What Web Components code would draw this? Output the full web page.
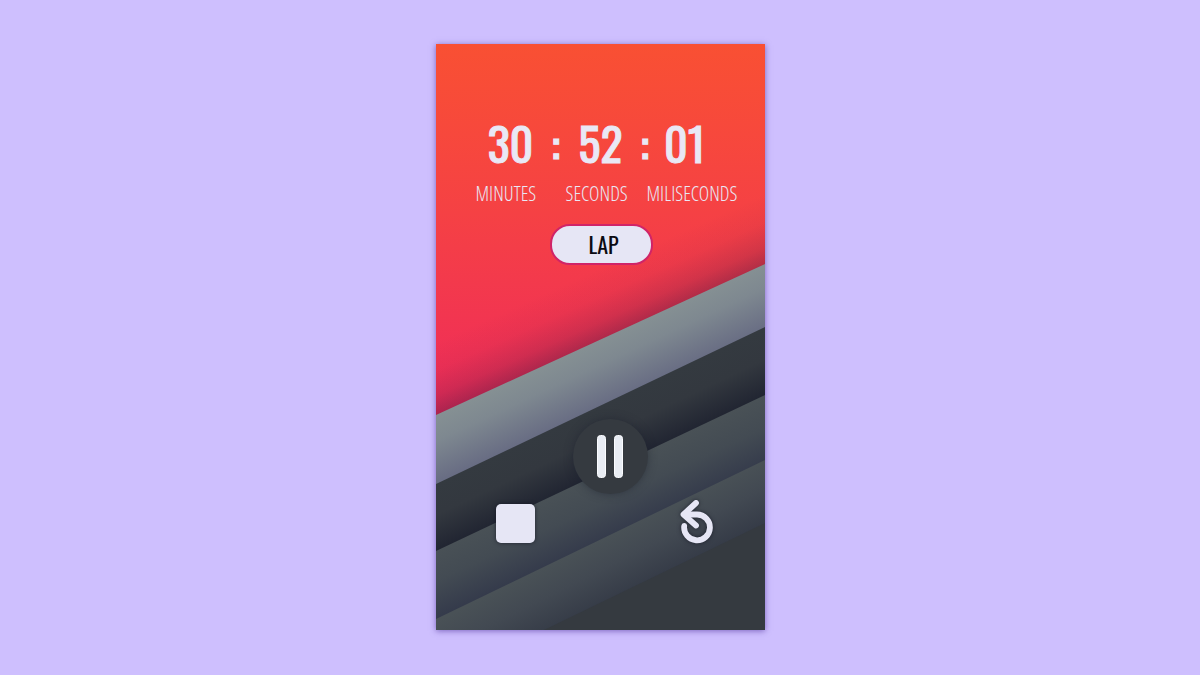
<!DOCTYPE html>
<html lang="en">
<head>
<meta charset="utf-8">
<meta name="viewport" content="width=device-width, initial-scale=1">
<title>Stopwatch</title>
<style>
  html, body { height: 100%; margin: 0; }
  body {
    display: grid;
    place-items: center;
    box-sizing: border-box;
    padding-bottom: 1px;
    background: #cebffe;
    font-family: "Oswald", "Liberation Sans Narrow", "Roboto Condensed", "Open Sans", sans-serif;
  }
</style>
</head>
<body>
<stopwatch-card>
  <time-readout slot="readout" minutes="30" seconds="52" miliseconds="01"></time-readout>
  <lap-button slot="readout">LAP</lap-button>
  <stopwatch-controls slot="controls"></stopwatch-controls>
</stopwatch-card>

<script>
class StopwatchCard extends HTMLElement {
  constructor() {
    super();
    this.attachShadow({ mode: "open" }).innerHTML = `
      <style>
        :host {
          display: block;
          position: relative;
          width: 100%;
          max-width: 329px;
          min-height: 586px;
          overflow: hidden;
          box-shadow: 0 1px 6px rgba(70, 40, 150, .6);
        }
        stripe-backdrop { position: absolute; inset: 0; }
        main {
          position: relative;
          display: flex;
          flex-direction: column;
          min-height: 586px;
        }
        header {
          display: flex;
          flex-direction: column;
          align-items: center;
          padding-top: 70px;
        }
        footer { margin-top: 154px; }
      </style>
      <stripe-backdrop></stripe-backdrop>
      <main>
        <header><slot name="readout"></slot></header>
        <footer><slot name="controls"></slot></footer>
      </main>`;
  }
}

class StripeBackdrop extends HTMLElement {
  constructor() {
    super();
    this.attachShadow({ mode: "open" }).innerHTML = `
      <style>
        :host { display: block; }
        svg { display: block; width: 100%; height: 100%; }
      </style>
      <svg viewBox="0 0 329 586" preserveAspectRatio="none" aria-hidden="true">
        <defs>
          <linearGradient id="sky" gradientUnits="userSpaceOnUse" x1="0" y1="0" x2="0" y2="375">
            <stop offset="0" stop-color="#f95033"/>
            <stop offset=".45" stop-color="#f54144"/>
            <stop offset="1" stop-color="#ef2a5c"/>
          </linearGradient>
          <linearGradient id="skyShade" gradientUnits="userSpaceOnUse" x1="137" y1="236" x2="164" y2="296">
            <stop offset="0" stop-color="#5a1440" stop-opacity="0"/>
            <stop offset=".4" stop-color="#5a1c40" stop-opacity=".06"/>
            <stop offset=".75" stop-color="#5a1c40" stop-opacity=".22"/>
            <stop offset="1" stop-color="#5a1c40" stop-opacity=".44"/>
          </linearGradient>
          <linearGradient id="steel" gradientUnits="userSpaceOnUse" x1="164" y1="296" x2="191" y2="354">
            <stop offset="0" stop-color="#859093"/>
            <stop offset=".35" stop-color="#7e8890"/>
            <stop offset="1" stop-color="#666a82"/>
          </linearGradient>
          <linearGradient id="coal" gradientUnits="userSpaceOnUse" x1="164" y1="362" x2="191" y2="419">
            <stop offset="0" stop-color="#343a40"/>
            <stop offset=".45" stop-color="#33383f"/>
            <stop offset="1" stop-color="#202431"/>
          </linearGradient>
          <linearGradient id="slate" gradientUnits="userSpaceOnUse" x1="164" y1="429" x2="191" y2="487">
            <stop offset="0" stop-color="#495156"/>
            <stop offset=".45" stop-color="#434b53"/>
            <stop offset="1" stop-color="#343a4b"/>
          </linearGradient>
          <linearGradient id="slateLow" gradientUnits="userSpaceOnUse" x1="164" y1="496" x2="191" y2="550">
            <stop offset="0" stop-color="#495156"/>
            <stop offset=".45" stop-color="#424952"/>
            <stop offset="1" stop-color="#353b47"/>
          </linearGradient>
        </defs>
        <path fill="url(#sky)" d="M0 0H329V222L0 373Z"/>
        <path fill="url(#skyShade)" d="M0 0H329V222L0 373Z"/>
        <path fill="url(#steel)" d="M0 371L329 220V285L0 442Z"/>
        <path fill="url(#coal)" d="M0 440L329 283V353L0 509Z"/>
        <path fill="url(#slate)" d="M0 507L329 351V418L0 577Z"/>
        <path fill="url(#slateLow)" d="M0 575L329 416V586H0Z"/>
        <path fill="#353a40" d="M108 586L329 479V586Z"/>
      </svg>`;
  }
}

class TimeReadout extends HTMLElement {
  connectedCallback() {
    const value = name => this.getAttribute(name);
    this.attachShadow({ mode: "open" }).innerHTML = `
      <style>
        :host { display: block; width: 100%; color: #e9e8f5; }
        .digits {
          display: grid;
          grid-template-columns: 44px 46px 44px 44px 36px;
          padding-left: 53px;
          font-size: 46px;
          -webkit-text-stroke: 1px currentColor;
          line-height: 56px;
        }
        .digits span { display: flex; justify-content: center; white-space: nowrap; }
        .labels {
          display: grid;
          grid-template-columns: 90px 81px auto;
          padding: 12px 0 0 40px;
          font-family: "Open Sans Condensed Light", "Open Sans Condensed", "Roboto Condensed Light", "Liberation Sans Narrow", sans-serif;
          font-weight: 300;
          font-size: 20px;
          line-height: 24px;
        }
      </style>
      <div class="digits" role="timer">
        <span>${value("minutes")}</span><span>:</span>
        <span>${value("seconds")}</span><span>:</span>
        <span>${value("miliseconds")}</span>
      </div>
      <div class="labels">
        <span>MINUTES</span><span>SECONDS</span><span>MILISECONDS</span>
      </div>`;
  }
}

class LapButton extends HTMLElement {
  constructor() {
    super();
    this.attachShadow({ mode: "open" }).innerHTML = `
      <style>
        :host { display: block; margin: 18px 0 0 3px; }
        button {
          display: block;
          width: 103px;
          height: 41px;
          padding: 0 0 2px 4px;
          border: 2px solid #d02468;
          border-radius: 20px;
          background: #e6e6f5;
          color: #0b0b12;
          font: inherit;
          font-size: 22px;
          cursor: pointer;
        }
      </style>
      <button type="button"><slot></slot></button>`;
  }
}

class StopwatchControls extends HTMLElement {
  constructor() {
    super();
    this.attachShadow({ mode: "open" }).innerHTML = `
      <style>
        :host {
          display: grid;
          grid-template-columns: 137px 75px 1fr;
          grid-template-rows: 125px;
          align-items: end;
        }
        button { display: block; padding: 0; border: 0; background: none; cursor: pointer; }
        svg { display: block; overflow: visible; }
        .stop { justify-self: end; margin-right: 37px; }
        .pause {
          align-self: start;
          display: grid;
          place-items: center;
          width: 75px;
          height: 75px;
          border-radius: 50%;
          background: #353a40;
          box-shadow: 0 0 8px rgba(28, 32, 45, .5);
        }
        .reset { margin-left: 31px; }
        .stop svg, .reset svg { filter: drop-shadow(0 0 2px rgba(15, 17, 32, .7)); }
      </style>
      <button class="stop" type="button" aria-label="Stop">
        <svg width="41" height="41" viewBox="0 0 41 41"><rect x="1" y="1" width="39" height="39" rx="5" fill="#e6e6f5"/></svg>
      </button>
      <button class="pause" type="button" aria-label="Pause">
        <svg width="28" height="46" viewBox="0 0 28 46" fill="#e9edf4" stroke="#fbfcff">
          <rect x="1.5" y="1.5" width="8" height="42" rx="3"/>
          <rect x="18.5" y="1.5" width="8" height="42" rx="3"/>
        </svg>
      </button>
      <button class="reset" type="button" aria-label="Reset">
        <svg width="36" height="46" viewBox="0 0 36 46" fill="none" stroke="#e6e6f5" stroke-width="5.8" stroke-linecap="round" stroke-linejoin="round">
          <path d="M17 5L4.500 16.500L17 27.500"/>
          <path d="M5.500 16.500H18A12.900 12.900 0 1 1 5.200 28"/>
        </svg>
      </button>`;
  }
}

customElements.define("stripe-backdrop", StripeBackdrop);
customElements.define("stopwatch-card", StopwatchCard);
customElements.define("time-readout", TimeReadout);
customElements.define("lap-button", LapButton);
customElements.define("stopwatch-controls", StopwatchControls);
</script>
</body>
</html>
